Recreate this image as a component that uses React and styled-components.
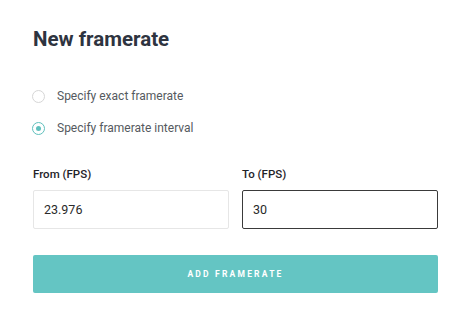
import React, { useState } from "react";
import styled, { createGlobalStyle } from "styled-components";

const GlobalStyle = createGlobalStyle`
  html, body {
    margin: 0;
    padding: 0;
    background: #ffffff;
    font-family: Roboto, "Noto Sans", Arial, sans-serif;
  }
`;

const Panel = styled.div`
  width: 474px;
  height: 336px;
  box-sizing: border-box;
  padding: 24px 36px 0 33px;
`;

const Title = styled.h1`
  margin: 0;
  font-size: 20.5px;
  line-height: 30px;
  font-weight: 700;
  color: #2e3440;
`;

const RadioGroup = styled.div`
  display: flex;
  flex-direction: column;
  gap: 12px;
  margin-top: 32px;
`;

const RadioRow = styled.label`
  display: flex;
  align-items: center;
  gap: 12px;
  height: 20px;
  font-size: 12px;
  color: #555a60;
  cursor: pointer;
`;

const RadioDot = styled.span`
  width: 13px;
  height: 13px;
  box-sizing: border-box;
  border-radius: 50%;
  border: 1.5px solid ${(p) => (p.$checked ? "#5fc0bd" : "#d6d6d6")};
  display: flex;
  align-items: center;
  justify-content: center;
  margin-left: -1px;

  &::after {
    content: "";
    width: 5px;
    height: 5px;
    border-radius: 50%;
    background: ${(p) => (p.$checked ? "#5fc0bd" : "transparent")};
  }
`;

const Fields = styled.div`
  display: grid;
  grid-template-columns: 196px 196px;
  column-gap: 13px;
  margin-top: 28px;
`;

const Field = styled.div`
  display: flex;
  flex-direction: column;
  gap: 8px;
`;

const Label = styled.div`
  font-size: 11.5px;
  line-height: 16px;
  font-weight: 500;
  color: #1f2328;
`;

const Input = styled.input`
  height: 39px;
  box-sizing: border-box;
  padding: 0 10px;
  border-radius: 2px;
  border: 1px solid #e6e6e6;
  font-family: inherit;
  font-size: 12.5px;
  color: #2a2a2a;
  outline: none;
  background: #fff;
  caret-color: #222;

  &:focus {
    border-color: #3a3a3a;
  }
`;

const Button = styled.button`
  display: block;
  width: 405px;
  height: 38px;
  margin-top: 26px;
  border: none;
  border-radius: 2px;
  background: #64c5c3;
  color: #ffffff;
  font-family: inherit;
  font-size: 8.5px;
  font-weight: 700;
  letter-spacing: 2.2px;
  cursor: pointer;
`;

export default function App() {
  const [mode, setMode] = useState("interval");
  const [from, setFrom] = useState("23.976");
  const [to, setTo] = useState("30");

  return (
    <>
      <GlobalStyle />
      <Panel>
        <Title>New framerate</Title>
        <RadioGroup>
          <RadioRow onClick={() => setMode("exact")}>
            <RadioDot $checked={mode === "exact"} />
            Specify exact framerate
          </RadioRow>
          <RadioRow onClick={() => setMode("interval")}>
            <RadioDot $checked={mode === "interval"} />
            Specify framerate interval
          </RadioRow>
        </RadioGroup>
        <Fields>
          <Field>
            <Label>From (FPS)</Label>
            <Input value={from} onChange={(e) => setFrom(e.target.value)} />
          </Field>
          <Field>
            <Label>To (FPS)</Label>
            <Input autoFocus value={to} onChange={(e) => setTo(e.target.value)} />
          </Field>
        </Fields>
        <Button>ADD FRAMERATE</Button>
      </Panel>
    </>
  );
}
